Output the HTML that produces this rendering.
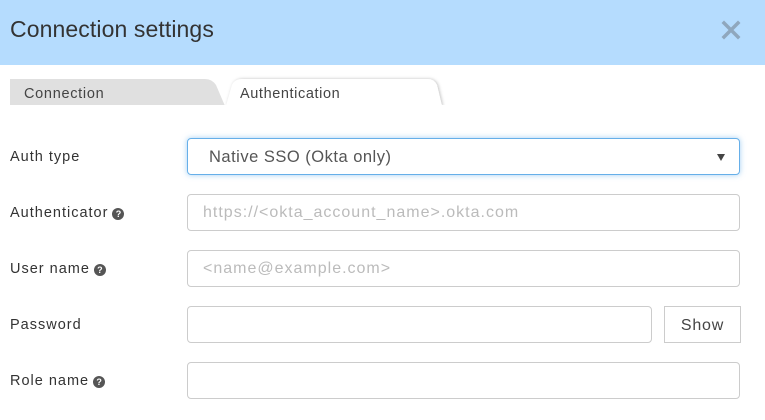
<!DOCTYPE html>
<html><head><meta charset="utf-8"><style>
*{box-sizing:border-box;margin:0;padding:0}
body{width:765px;height:420px;background:#fff;font-family:"Liberation Sans",sans-serif;position:relative;overflow:hidden;color:#333}
.hdr{position:absolute;left:0;top:0;width:765px;height:65px;background:#b5dcfe}
.hdr h1{position:absolute;left:10px;top:16px;font-size:23px;font-weight:normal;color:#333;letter-spacing:0.1px}
.x{position:absolute;left:718px;top:17px;width:26px;height:26px}
.lbl{position:absolute;left:10px;font-size:14.5px;color:#333;letter-spacing:1px}
.q{display:inline-block;width:12px;height:12px;border-radius:50%;background:#555;color:#fff;font-size:9px;font-weight:bold;text-align:center;line-height:12px;vertical-align:0px;margin-left:4px;letter-spacing:0}
.in{position:absolute;left:187px;width:553px;height:37px;border:1px solid #ccc;border-radius:4px;font-size:16px;color:#bbb;padding:9px 15px;letter-spacing:1px;white-space:nowrap}
.sel{border-color:#66afe9;box-shadow:0 0 6px rgba(102,175,233,.6);color:#555;padding-left:21px;letter-spacing:0.5px}
.arr{position:absolute;right:14px;top:15px;width:0;height:0;border-left:4px solid transparent;border-right:4px solid transparent;border-top:7px solid #444}
.btn{position:absolute;left:664px;top:306px;width:77px;height:37px;border:1px solid #ccc;font-size:16px;color:#444;text-align:center;line-height:37px;letter-spacing:0.8px}
</style></head><body>
<div class="hdr"><h1>Connection settings</h1>
<svg class="x" viewBox="0 0 26 26"><path d="M6 6L20 20M20 6L6 20" stroke="#8fa7bd" stroke-width="3.5" stroke-linecap="square"/></svg></div>
<svg style="position:absolute;left:0;top:75px" width="460" height="32">
<defs><filter id="s" x="-10%" y="-30%" width="120%" height="160%"><feDropShadow dx="1" dy="0" stdDeviation="1.5" flood-color="#000" flood-opacity="0.25"/></filter></defs>
<path d="M10 4H205Q212 4 216 10L225 31H10Z" fill="#e0e0e0"/>
<path d="M226 31L232 10Q235 4 242 4H428Q434 4 437 10L442 31Z" fill="#fff" filter="url(#s)"/>
<rect x="0" y="30" width="460" height="2" fill="#fff"/>
<text x="24" y="23" font-family="Liberation Sans" font-size="14.5" letter-spacing="0.7" fill="#444">Connection</text>
<text x="240" y="23" font-family="Liberation Sans" font-size="14.5" letter-spacing="0.6" fill="#444">Authentication</text>
</svg>
<div class="lbl" style="top:149px">Auth type</div>
<div class="in sel" style="top:138px;font-size:16.5px">Native SSO (Okta only)<div class="arr"></div></div>
<div class="lbl" style="top:205px">Authenticator<span class="q">?</span></div>
<div class="in" style="top:194px">https://&lt;okta_account_name&gt;.okta.com</div>
<div class="lbl" style="top:261px">User name<span class="q">?</span></div>
<div class="in" style="top:250px">&lt;name@example.com&gt;</div>
<div class="lbl" style="top:317px">Password</div>
<div class="in" style="top:306px;width:465px"></div>
<div class="btn">Show</div>
<div class="lbl" style="top:373px">Role name<span class="q">?</span></div>
<div class="in" style="top:362px"></div>
</body></html>
